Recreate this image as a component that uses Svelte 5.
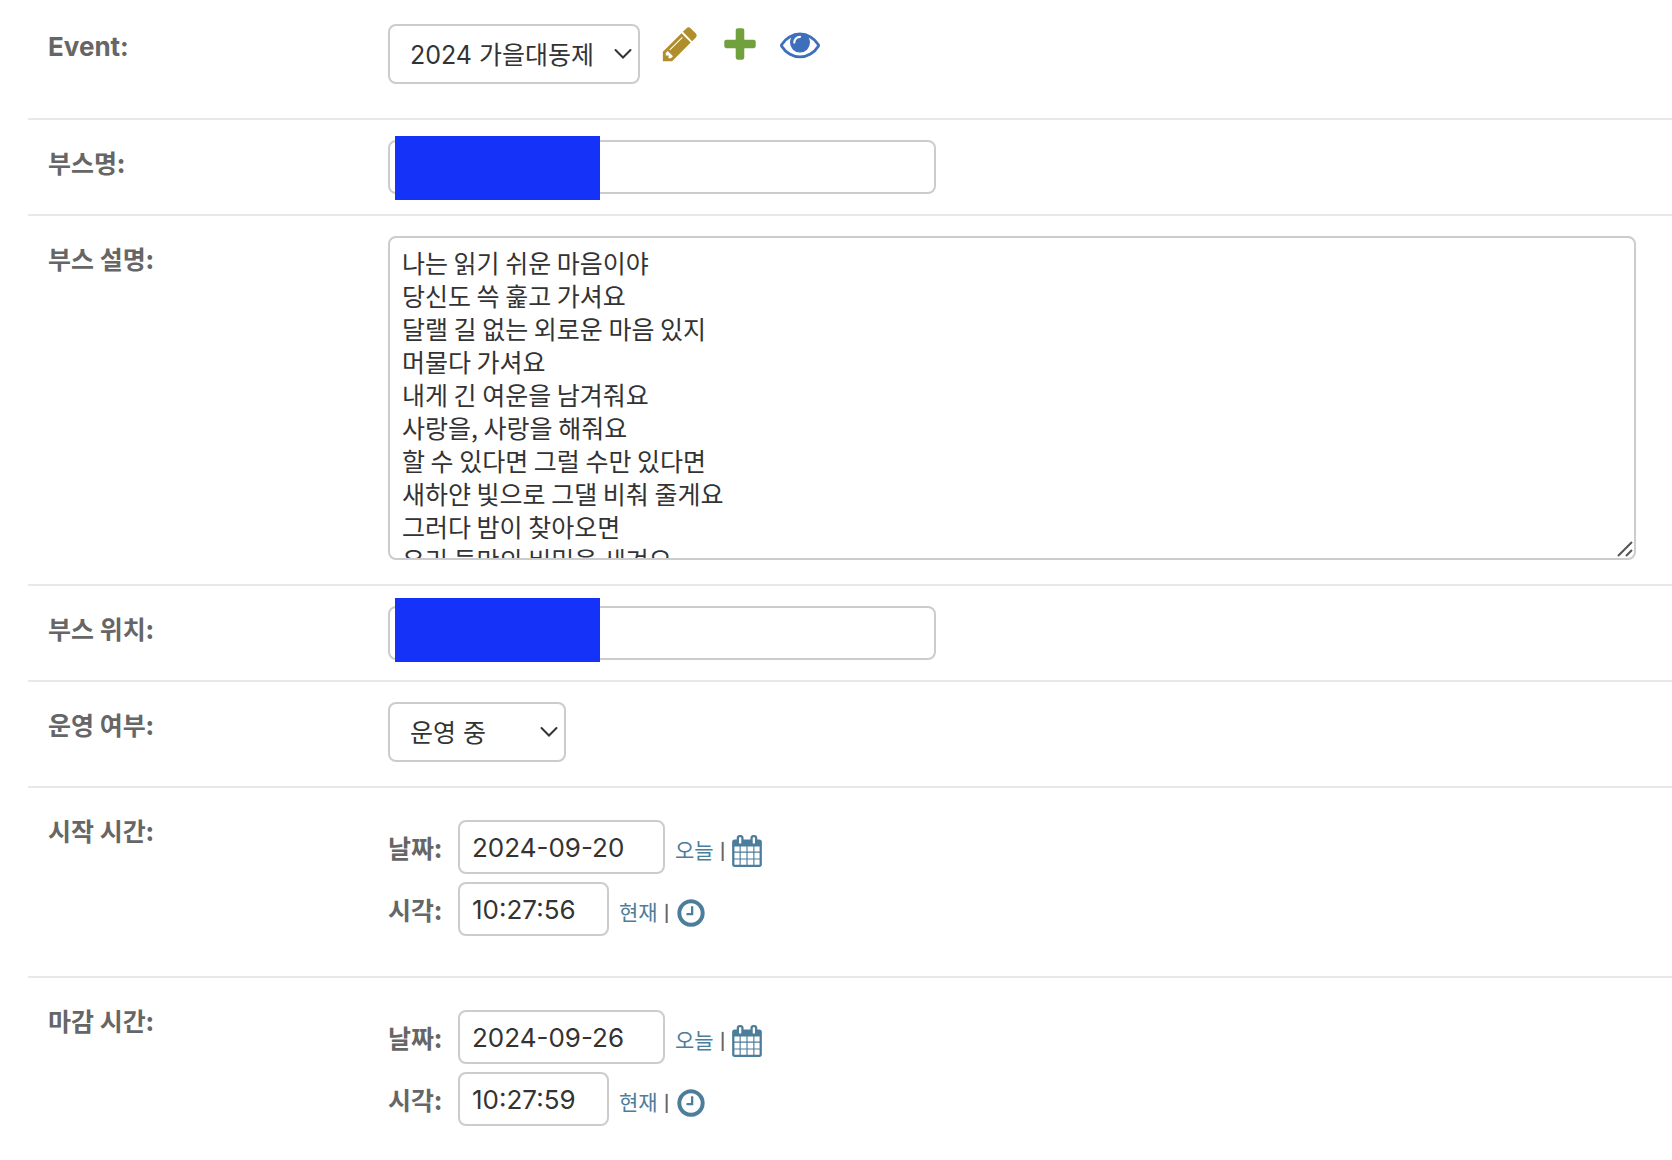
<script lang="ts">
	const events = ['2024 가을대동제'];
	const statuses = ['운영 중', '운영 종료'];

	let event = $state(events[0]);
	let status = $state(statuses[0]);
	let name = $state('');
	let location = $state('');
	let description = $state(
		[
			'나는 읽기 쉬운 마음이야',
			'당신도 쓱 훑고 가셔요',
			'달랠 길 없는 외로운 마음 있지',
			'머물다 가셔요',
			'내게 긴 여운을 남겨줘요',
			'사랑을, 사랑을 해줘요',
			'할 수 있다면 그럴 수만 있다면',
			'새하얀 빛으로 그댈 비춰 줄게요',
			'그러다 밤이 찾아오면',
			'우리 둘만의 비밀을 새겨요'
		].join('\n')
	);

	let periods = $state([
		{ id: 'start', label: '시작 시간:', date: '2024-09-20', time: '10:27:56' },
		{ id: 'end', label: '마감 시간:', date: '2024-09-26', time: '10:27:59' }
	]);

	const relatedLinks = [
		{
			kind: 'change',
			title: 'Change selected event',
			d: 'M491 1536l91-91-235-235-91 91v107h128v128h107zm523-928q0-22-22-22-10 0-17 7l-542 542q-7 7-7 17 0 22 22 22 10 0 17-7l542-542q7-7 7-17zm-54-192l416 416-832 832h-416v-416zm683 96q0 53-37 90l-166 166-416-416 166-165q36-38 90-38 53 0 91 38l235 234q37 39 37 91z'
		},
		{
			kind: 'add',
			title: 'Add another event',
			d: 'M1600 796v192q0 40-28 68t-68 28h-416v416q0 40-28 68t-68 28h-192q-40 0-68-28t-28-68v-416h-416q-40 0-68-28t-28-68v-192q0-40 28-68t68-28h416v-416q0-40 28-68t68-28h192q40 0 68 28t28 68v416h416q40 0 68 28t28 68z'
		},
		{
			kind: 'view',
			title: 'View selected event',
			d: 'M1664 960q-152-236-381-353 61 104 61 225 0 185-131.5 316.5t-316.5 131.5-316.5-131.5-131.5-316.5q0-121 61-225-229 117-381 353 133 205 333.5 326.5t434.5 121.5 434.5-121.5 333.5-326.5zm-720-384q0-20-14-34t-34-14q-125 0-214.5 89.5t-89.5 214.5q0 20 14 34t34 14 34-14 14-34q0-86 61-147t147-61q20 0 34-14t14-34zm848 384q0 34-20 69-140 230-376.5 368.5t-499.5 138.5-499.5-139-376.5-368q-20-35-20-69t20-69q140-229 376.5-368t499.5-139 499.5 139 376.5 368q20 35 20 69z'
		}
	];

	const calendarPath =
		'M192 1664h288v-288h-288v288zm352 0h320v-288h-320v288zm-352-352h288v-320h-288v320zm352 0h320v-320h-320v320zm-352-384h288v-288h-288v288zm736 736h320v-288h-320v288zm-384-736h320v-288h-320v288zm768 736h288v-288h-288v288zm-384-352h320v-320h-320v320zm-352-864v-288q0-13-9.5-22.5t-22.5-9.5h-64q-13 0-22.5 9.5t-9.5 22.5v288q0 13 9.5 22.5t22.5 9.5h64q13 0 22.5-9.5t9.5-22.5zm736 864h288v-320h-288v320zm-384-384h320v-288h-320v288zm384 0h288v-288h-288v288zm32-480v-288q0-13-9.5-22.5t-22.5-9.5h-64q-13 0-22.5 9.5t-9.5 22.5v288q0 13 9.5 22.5t22.5 9.5h64q13 0 22.5-9.5t9.5-22.5zm384-64v1280q0 52-38 90t-90 38h-1408q-52 0-90-38t-38-90v-1280q0-52 38-90t90-38h128v-96q0-66 47-113t113-47h64q66 0 113 47t47 113v96h384v-96q0-66 47-113t113-47h64q66 0 113 47t47 113v96h128q52 0 90 38t38 90z';
	const clockPath =
		'M1024 544v448q0 14-9 23t-23 9h-320q-14 0-23-9t-9-23v-64q0-14 9-23t23-9h224v-352q0-14 9-23t23-9h64q14 0 23 9t9 23zm416 352q0-148-73-273t-198-198-273-73-273 73-198 198-73 273 73 273 198 198 273 73 273-73 198-198 73-273zm224 0q0 209-103 385.5t-279.5 279.5-385.5 103-385.5-103-279.5-279.5-103-385.5 103-385.5 279.5-279.5 385.5-103 385.5 103 279.5 279.5 103 385.5z';
</script>

{#snippet chevron()}
	<svg class="chevron" viewBox="0 0 18 12" aria-hidden="true">
		<path d="M1.5 2L9 9.5L16.5 2" />
	</svg>
{/snippet}

{#snippet shortcuts(text: string, title: string, d: string)}
	<span class="shortcuts">
		<a href="#now">{text}</a>
		<span class="bar">|</span>
		<a href="#picker" aria-label={title}>
			<svg viewBox="0 0 1792 1792" aria-hidden="true"><path {d} /></svg>
		</a>
	</span>
{/snippet}

<form class="module">
	<div class="row row-related">
		<label class="latin" for="event">Event:</label>
		<div class="related">
			<span class="select event">
				<select id="event" bind:value={event}>
					{#each events as e (e)}
						<option>{e}</option>
					{/each}
				</select>
				{@render chevron()}
			</span>
			{#each relatedLinks as link (link.kind)}
				<a class="related-link {link.kind}" href="#{link.kind}" aria-label={link.title}>
					<svg viewBox="0 0 1792 1792" aria-hidden="true"><path d={link.d} /></svg>
				</a>
			{/each}
		</div>
	</div>

	<div class="row">
		<label for="name">부스명:</label>
		<div class="covered">
			<input id="name" type="text" bind:value={name} />
			<span class="cover"></span>
		</div>
	</div>

	<div class="row row-loose">
		<label for="description">부스 설명:</label>
		<div class="area">
			<textarea id="description" spellcheck="false" bind:value={description}></textarea>
			<svg class="grip" viewBox="0 0 16 16" aria-hidden="true">
				<path d="M1 15L15 1M9 15L15 9" />
			</svg>
		</div>
	</div>

	<div class="row">
		<label for="location">부스 위치:</label>
		<div class="covered">
			<input id="location" type="text" bind:value={location} />
			<span class="cover raised"></span>
		</div>
	</div>

	<div class="row row-loose">
		<label for="status">운영 여부:</label>
		<span class="select status">
			<select id="status" bind:value={status}>
				{#each statuses as s (s)}
					<option>{s}</option>
				{/each}
			</select>
			{@render chevron()}
		</span>
	</div>

	{#each periods as p (p.id)}
		<div class="row" role="group" aria-labelledby="{p.id}-label">
			<span class="label" id="{p.id}-label">{p.label}</span>
			<div class="datetime">
				<div class="line">
					<label for="{p.id}-date">날짜:</label>
					<input class="date" id="{p.id}-date" type="text" bind:value={p.date} />
					{@render shortcuts('오늘', '달력 선택', calendarPath)}
				</div>
				<div class="line">
					<label for="{p.id}-time">시각:</label>
					<input class="time" id="{p.id}-time" type="text" bind:value={p.time} />
					{@render shortcuts('현재', '시간 선택', clockPath)}
				</div>
			</div>
		</div>
	{/each}
</form>

<style>
	:global(body) {
		margin: 0;
		background: #fff;
		color: #333;
	}
	.module {
		padding: 4px 0 0 28px;
		font-family: 'Noto Sans CJK KR', sans-serif;
		font-size: 25px;
		line-height: 33px;
	}
	.row {
		display: grid;
		grid-template-columns: 340px 1fr;
		align-items: start;
		padding: 20px 36px 20px 20px;
		border-bottom: 2px solid #e8e8e8;
	}
	.row:last-child {
		border-bottom: 0;
	}
	.row-loose {
		padding-bottom: 24px;
	}
	.row-related {
		padding-bottom: 34px;
	}
	label,
	.label {
		padding-top: 6px;
		color: #666;
		font-weight: 700;
	}
	.latin {
		font-family: Inter, sans-serif;
		font-size: 26px;
	}

	input,
	select,
	textarea {
		box-sizing: border-box;
		margin: 0;
		border: 2px solid #ccc;
		border-radius: 8px;
		background: #fff;
		color: #333;
		font-family: Inter, 'Noto Sans CJK KR', sans-serif;
		font-size: 26px;
		outline: none;
	}
	input {
		display: block;
		width: 548px;
		height: 54px;
		padding: 0 12px;
	}
	.date {
		width: 207px;
	}
	.time {
		width: 151px;
	}

	.select {
		position: relative;
		display: block;
	}
	.event {
		width: 252px;
	}
	.status {
		width: 178px;
	}
	select {
		display: block;
		appearance: none;
		width: 100%;
		height: 60px;
		padding: 2px 28px 0 20px;
		font-size: 25px;
	}
	.chevron {
		position: absolute;
		top: 24px;
		right: 8px;
		width: 18px;
		height: 12px;
		fill: none;
		stroke: #333;
		stroke-width: 2;
		stroke-linecap: round;
		pointer-events: none;
	}

	.related {
		display: flex;
		align-items: flex-start;
		gap: 20px;
	}
	.related-link svg {
		display: block;
		width: 40px;
		height: 40px;
		fill: currentColor;
	}
	.change {
		color: #b08e2c;
	}
	.add {
		color: #70a13c;
	}
	.view {
		color: #3e6fbc;
	}

	/* solid block hiding the private value */
	.covered {
		position: relative;
	}
	.cover {
		position: absolute;
		top: -4px;
		left: 7px;
		width: 205px;
		height: 64px;
		background: #1432f8;
	}
	.cover.raised {
		top: -8px;
	}

	.area {
		position: relative;
	}
	textarea {
		display: block;
		width: 100%;
		height: 324px;
		padding: 8px 12px;
		font-family: 'Noto Sans CJK KR', sans-serif;
		font-size: 25px;
		line-height: 33px;
		resize: none;
		overflow: hidden;
	}
	.grip {
		position: absolute;
		right: 3px;
		bottom: 3px;
		width: 16px;
		height: 16px;
		fill: none;
		stroke: #555;
		stroke-width: 2;
		pointer-events: none;
	}

	.datetime {
		display: grid;
		gap: 8px;
		padding: 12px 0 20px;
	}
	.line {
		display: flex;
		align-items: center;
	}
	.line label {
		width: 70px;
		padding-top: 0;
	}
	.shortcuts {
		display: flex;
		align-items: center;
		gap: 6px;
		padding: 8px 0 0 10px;
		color: #666;
		font-family: Inter, 'Noto Sans CJK KR', sans-serif;
		font-size: 21px;
		line-height: 32px;
	}
	.shortcuts a {
		color: #4c7d9b;
		text-decoration: none;
	}
	.shortcuts .bar {
		font-size: 16px;
		font-weight: 600;
	}
	.shortcuts svg {
		display: block;
		width: 32px;
		height: 32px;
		fill: currentColor;
	}
</style>
